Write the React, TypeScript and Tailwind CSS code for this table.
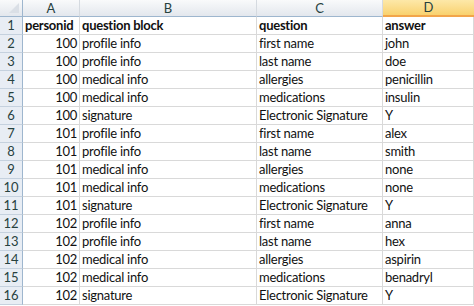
import React from "react";

const rows: [string, string, string, string][] = [
  ["100", "profile info", "first name", "john"],
  ["100", "profile info", "last name", "doe"],
  ["100", "medical info", "allergies", "penicillin"],
  ["100", "medical info", "medications", "insulin"],
  ["100", "signature", "Electronic Signature", "Y"],
  ["101", "profile info", "first name", "alex"],
  ["101", "profile info", "last name", "smith"],
  ["101", "medical info", "allergies", "none"],
  ["101", "medical info", "medications", "none"],
  ["101", "signature", "Electronic Signature", "Y"],
  ["102", "profile info", "first name", "anna"],
  ["102", "profile info", "last name", "hex"],
  ["102", "medical info", "allergies", "aspirin"],
  ["102", "medical info", "medications", "benadryl"],
  ["102", "signature", "Electronic Signature", "Y"],
];

export default function App() {
  const rowHead =
    "h-[18px] border-r border-b border-r-[#9eb6ce] border-b-[#c5d1de] bg-[#e8edf4] flex items-center justify-center text-[#27413e] tracking-normal";
  const cell =
    "h-[18px] border-r border-b border-[#d9d9d9] flex items-center px-[2px] text-[#111] overflow-hidden whitespace-nowrap";
  return (
    <div
      className="w-[474px] h-[306px] overflow-hidden bg-white text-[13px] leading-none tracking-[-0.25px]"
      style={{ fontFamily: "Lato, 'Liberation Sans', sans-serif" }}
    >
      <div className="grid grid-cols-[23px_57px_177px_126px_1fr]">
        {/* header row */}
        <div className="h-[17px] border-r border-b border-[#9eb6ce] bg-gradient-to-b from-[#f9fafb] to-[#e3e7ed] relative">
          <div className="absolute right-[3px] bottom-[3px] w-0 h-0 border-l-[10px] border-l-transparent border-b-[10px] border-b-[#dadfe6]" />
        </div>
        {["A", "B", "C"].map((c) => (
          <div
            key={c}
            className="h-[17px] border-r border-b border-r-[#d5dae0] border-b-[#9eb6ce] bg-gradient-to-b from-[#f9fafb] to-[#e3e7ed] flex items-center justify-center text-[#27413e] tracking-normal"
          >
            {c}
          </div>
        ))}
        <div className="h-[17px] border-b-2 border-b-[#f2a54a] bg-gradient-to-b from-[#fde8a8] to-[#f9d26e] flex items-center justify-center text-[#27413e] tracking-normal">
          D
        </div>

        {/* row 1 */}
        <div className={rowHead}>1</div>
        <div className={cell + " font-bold"}>personid</div>
        <div className={cell + " font-bold"}>question block</div>
        <div className={cell + " font-bold"}>question</div>
        <div className={cell + " font-bold"}>answer</div>

        {rows.map((r, i) => (
          <React.Fragment key={i}>
            <div className={rowHead}>{i + 2}</div>
            <div className={cell + " justify-end"}>{r[0]}</div>
            <div className={cell}>{r[1]}</div>
            <div className={cell}>{r[2]}</div>
            <div className={cell}>{r[3]}</div>
          </React.Fragment>
        ))}
      </div>
    </div>
  );
}
